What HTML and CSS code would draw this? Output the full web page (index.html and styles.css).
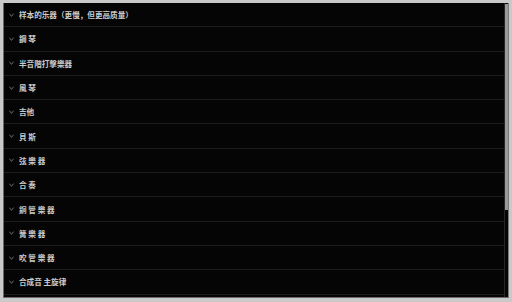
FILE: index.html
```html
<!DOCTYPE html>
<html lang="zh">
<head>
  <meta charset="UTF-8">
  <title>乐器</title>
  <link rel="stylesheet" href="styles.css">
</head>
<body>
  <div class="panel">
    <div class="list">
      <div class="row"><svg class="chev" viewBox="0 0 6 4"><path d="M0.5 0.8 L3 3.2 L5.5 0.8"/></svg><span>样本的乐器（更慢，但更高质量）</span></div>
      <div class="row"><svg class="chev" viewBox="0 0 6 4"><path d="M0.5 0.8 L3 3.2 L5.5 0.8"/></svg><span>鋼 琴</span></div>
      <div class="row"><svg class="chev" viewBox="0 0 6 4"><path d="M0.5 0.8 L3 3.2 L5.5 0.8"/></svg><span>半音階打擊樂器</span></div>
      <div class="row"><svg class="chev" viewBox="0 0 6 4"><path d="M0.5 0.8 L3 3.2 L5.5 0.8"/></svg><span>風 琴</span></div>
      <div class="row"><svg class="chev" viewBox="0 0 6 4"><path d="M0.5 0.8 L3 3.2 L5.5 0.8"/></svg><span>吉他</span></div>
      <div class="row"><svg class="chev" viewBox="0 0 6 4"><path d="M0.5 0.8 L3 3.2 L5.5 0.8"/></svg><span>貝 斯</span></div>
      <div class="row"><svg class="chev" viewBox="0 0 6 4"><path d="M0.5 0.8 L3 3.2 L5.5 0.8"/></svg><span>弦 樂 器</span></div>
      <div class="row"><svg class="chev" viewBox="0 0 6 4"><path d="M0.5 0.8 L3 3.2 L5.5 0.8"/></svg><span>合 奏</span></div>
      <div class="row"><svg class="chev" viewBox="0 0 6 4"><path d="M0.5 0.8 L3 3.2 L5.5 0.8"/></svg><span>銅 管 樂 器</span></div>
      <div class="row"><svg class="chev" viewBox="0 0 6 4"><path d="M0.5 0.8 L3 3.2 L5.5 0.8"/></svg><span>簧 樂 器</span></div>
      <div class="row"><svg class="chev" viewBox="0 0 6 4"><path d="M0.5 0.8 L3 3.2 L5.5 0.8"/></svg><span>吹 管 樂 器</span></div>
      <div class="row"><svg class="chev" viewBox="0 0 6 4"><path d="M0.5 0.8 L3 3.2 L5.5 0.8"/></svg><span>合成音 主旋律</span></div>
    </div>
    <div class="scroll"><div class="thumb"></div></div>
  </div>
</body>
</html>
```

FILE: styles.css
```css
html, body {
  margin: 0;
  height: 100%;
}
body {
  background-color: #c9c9c9;
  font-family: "Noto Sans CJK TC", "Noto Sans CJK SC", sans-serif;
  padding: 3px 3px 4px 3px;
  box-sizing: border-box;
}
.panel {
  display: flex;
  height: 100%;
  box-sizing: border-box;
  background: #050505;
  border-left: 1px solid #6a6a6a;
  border-right: 1px solid #7a7a7a;
  border-bottom: 1px solid #6a6a6a;
}
.list {
  flex: 1 1 auto;
  min-width: 0;
  overflow: hidden;
}
.scroll {
  flex: 0 0 4px;
  padding-top: 1px;
  background: #050505;
  border-left: 1px solid #262626;
  box-sizing: border-box;
}
.thumb {
  height: 206px;
  background: #9a9a9a;
}
.row {
  display: flex;
  align-items: center;
  height: 24.3px;
  box-sizing: border-box;
  border-bottom: 1px solid #1c1c1c;
  padding-left: 5px;
  color: #cbcbcb;
  font-size: 7.6px;
  font-weight: bold;
  white-space: nowrap;
}
.chev {
  width: 5px;
  height: 4px;
  margin-right: 5px;
  fill: none;
  stroke: #b0b0b0;
  stroke-width: 0.9;
}
```
